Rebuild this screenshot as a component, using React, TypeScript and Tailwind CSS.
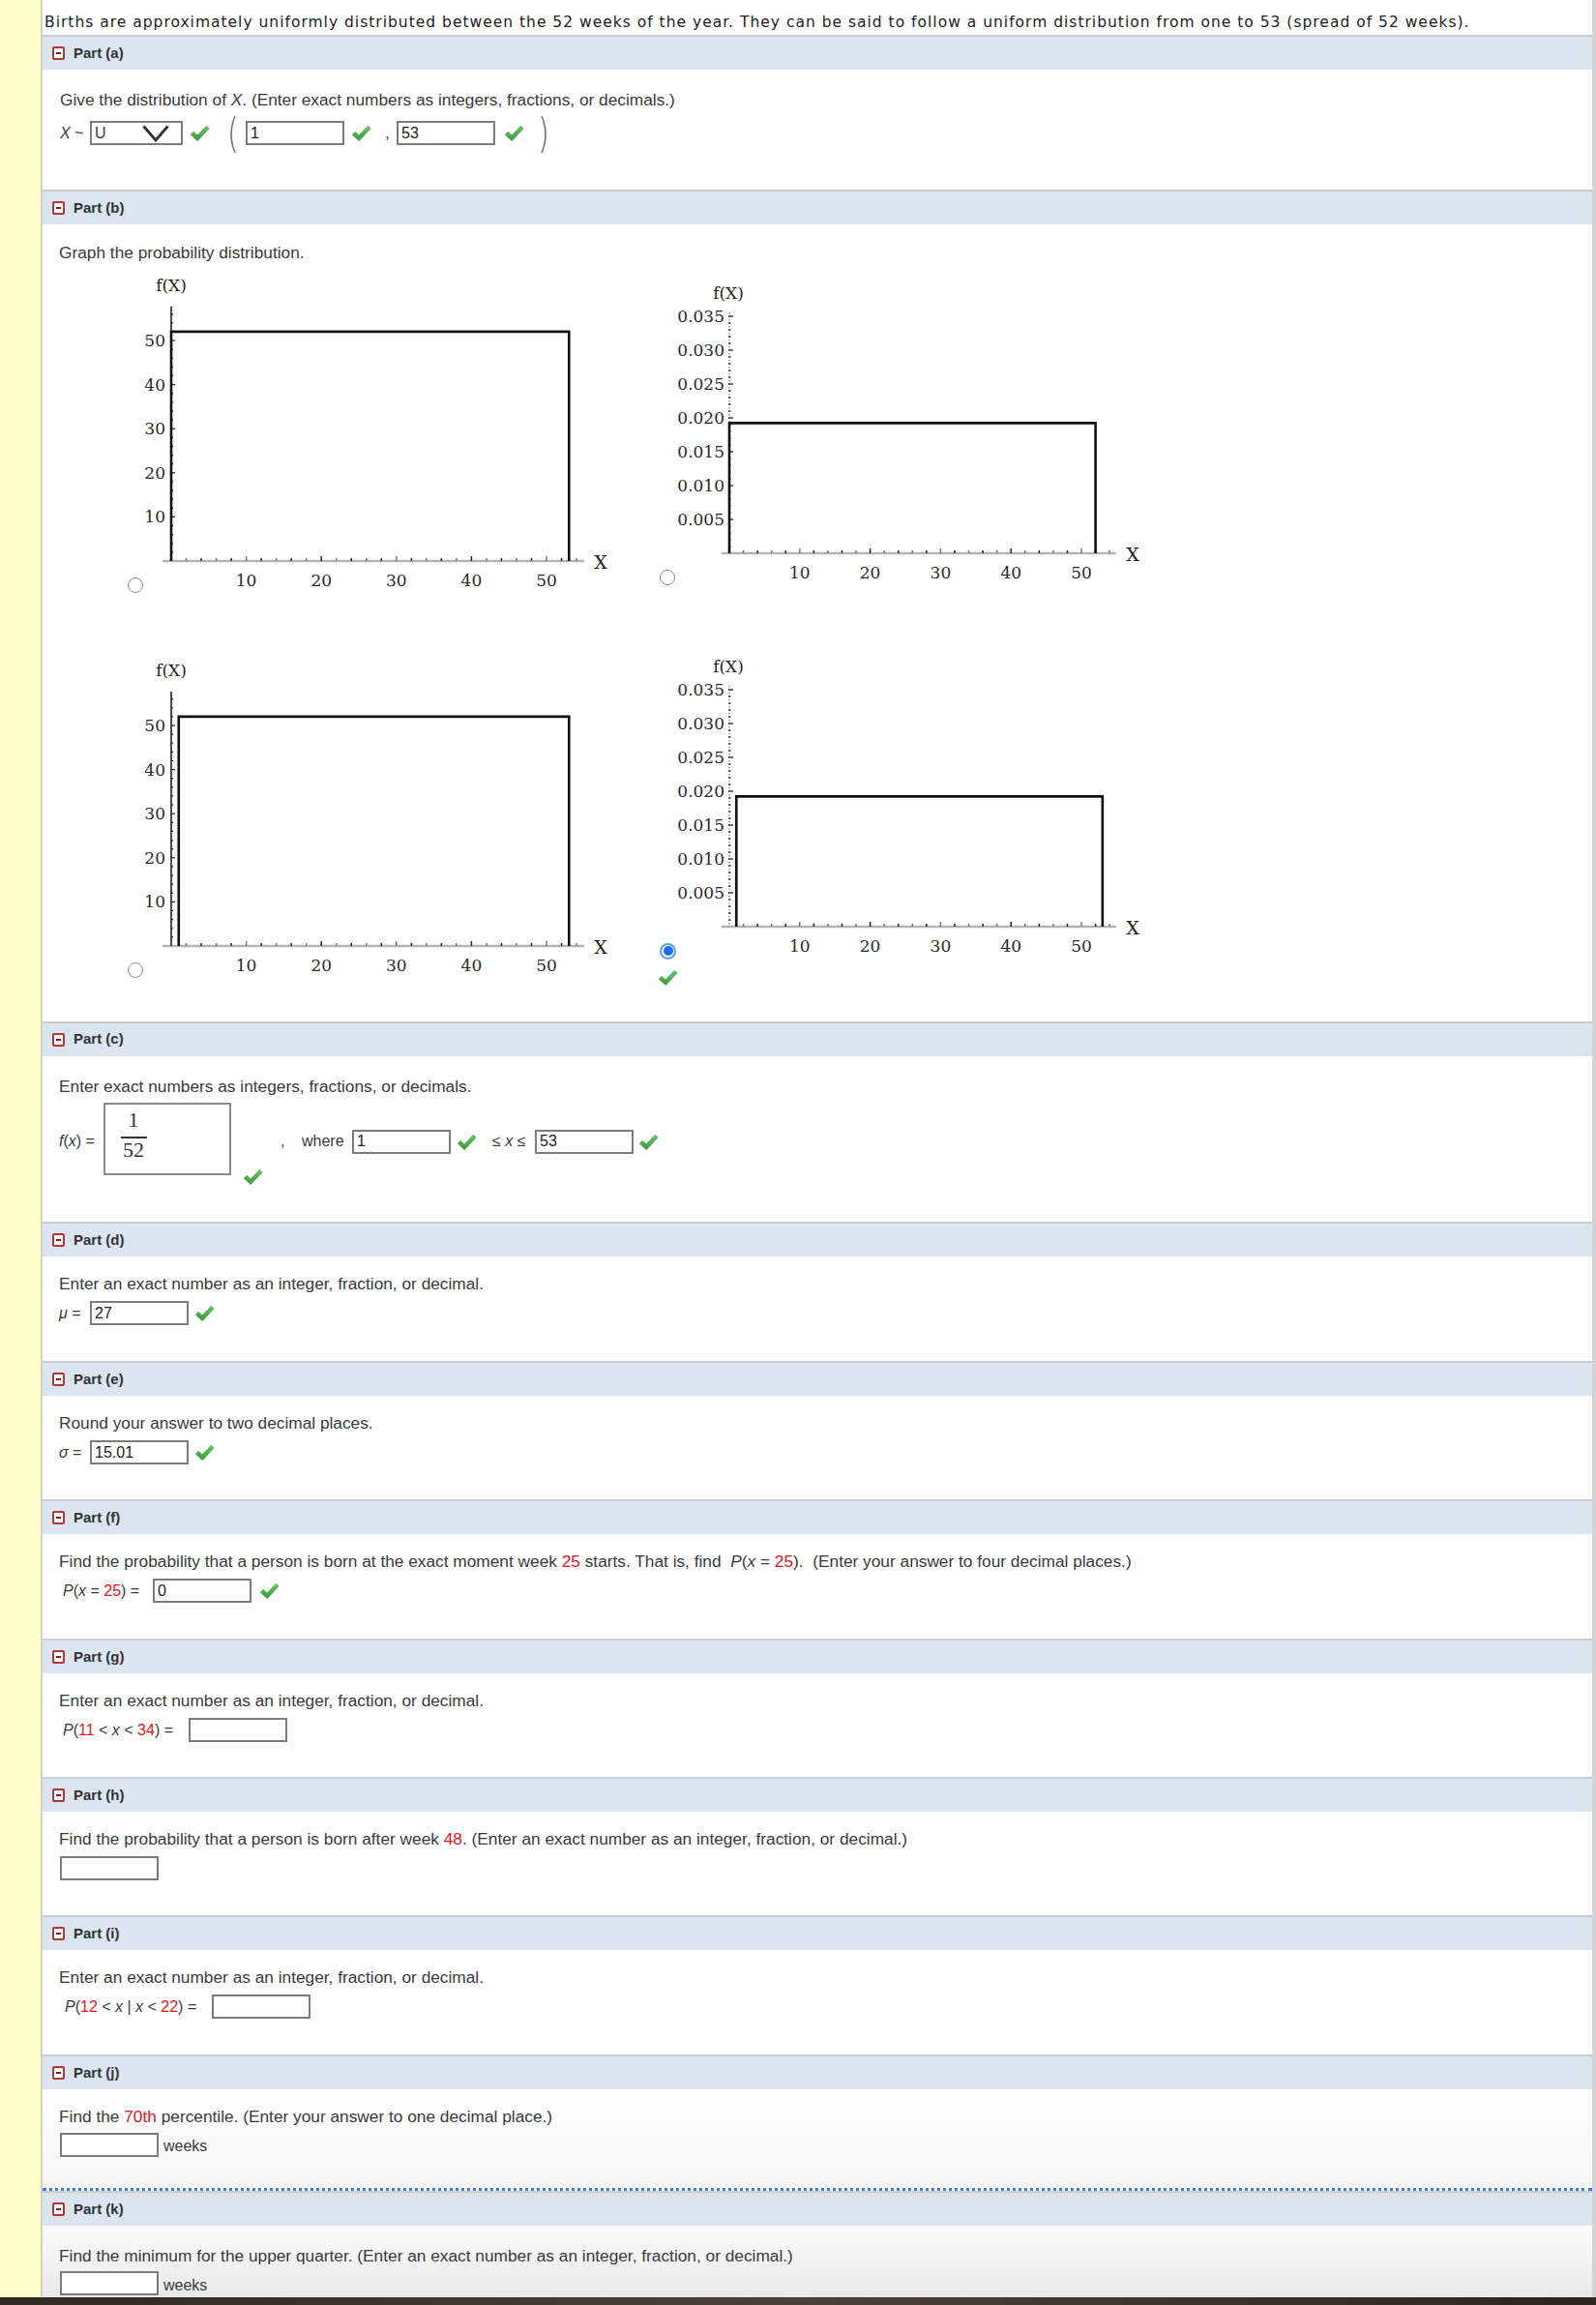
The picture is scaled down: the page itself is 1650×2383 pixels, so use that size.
import React from "react";

const SERIF = "DejaVu Serif, serif";

function Check({ className = "" }: { className?: string }) {
  return (
    <svg width="21" height="18" viewBox="0 0 21 18" className={"shrink-0 " + className}>
      <defs>
        <linearGradient id="cg" x1="0" y1="0" x2="0" y2="1">
          <stop offset="0" stopColor="#6cc46a" />
          <stop offset="1" stopColor="#3a9a3a" />
        </linearGradient>
      </defs>
      <path d="M0.8 10.2 L4.2 6.8 L8 10.4 L17.4 0.8 L20.6 4 L8.2 17 Z" fill="url(#cg)" />
    </svg>
  );
}

function Header({ label }: { label: string }) {
  return (
    <div className="h-[36px] bg-[#dae5ef] border-t-2 border-[#c9ced4] flex items-center pl-[10px]">
      <span className="w-[13px] h-[14px] border-2 border-[#b8352f] rounded-[2px] bg-white flex items-center justify-center">
        <span className="w-[5px] h-[2px] bg-[#8a1c1c]" />
      </span>
      <span className="ml-[9px] font-bold text-[15px] text-[#333] font-['Liberation_Sans',Arial,sans-serif]">{label}</span>
    </div>
  );
}

function Box({ value = "" }: { value?: string }) {
  return (
    <div className="w-[102px] h-[25px] shrink-0 border-2 border-[#7c7c7c] bg-white flex items-center pl-[3px] text-[16px] text-[#222] leading-none">
      {value}
    </div>
  );
}

function Red({ children }: { children: React.ReactNode }) {
  return <span className="text-[#e8141a]">{children}</span>;
}

function Radio({ selected = false }: { selected?: boolean }) {
  if (selected) {
    return (
      <div className="w-[17px] h-[17px] rounded-full border-2 border-[#5a9cf8] bg-white flex items-center justify-center shrink-0">
        <div className="w-[10px] h-[10px] rounded-full bg-[#1a6ff2]" />
      </div>
    );
  }
  return <div className="w-[16px] h-[16px] rounded-full border-[1.5px] border-[#8a8a8a] bg-white shrink-0" />;
}

function GraphInt({ x0 }: { x0: number }) {
  const ox = 27;
  const ay = 302;
  const xs = 7.76;
  const ys = 4.56;
  const X = (u: number) => ox + u * xs;
  const Y = (v: number) => ay - v * ys;
  const yt: number[] = [];
  for (let v = 2; v <= 56; v += 2) yt.push(v);
  const xt: number[] = [];
  for (let u = 2; u <= 54; u += 2) xt.push(u);
  return (
    <svg width="490" height="340" className="shrink-0">
      <text x={27} y={23} textAnchor="middle" fontFamily={SERIF} fontSize="17" fill="#222">
        f(X)
      </text>
      <line x1={18} y1={ay} x2={454} y2={ay} stroke="#b4b4b4" strokeWidth="2.5" />
      {xt.map((u) => (
        <line key={"x" + u} x1={X(u)} y1={ay} x2={X(u)} y2={u % 10 === 0 ? ay - 5 : ay - 3} stroke={u % 4 === 0 ? "#222" : "#777"} strokeWidth="1.5" />
      ))}
      <line x1={ox} y1={39} x2={ox} y2={ay} stroke="#222" strokeWidth="1.6" />
      {yt.map((v) => (
        <line key={"y" + v} x1={ox} y1={Y(v)} x2={v % 10 === 0 ? ox + 4 : ox + 2} y2={Y(v)} stroke="#222" strokeWidth="1.2" />
      ))}
      {[10, 20, 30, 40, 50].map((v) => (
        <text key={"yl" + v} x={21} y={Y(v) + 6} textAnchor="end" fontFamily={SERIF} fontSize="17" fill="#2a2a2a">
          {v}
        </text>
      ))}
      {[10, 20, 30, 40, 50].map((u) => (
        <text key={"xl" + u} x={X(u)} y={ay + 26} textAnchor="middle" fontFamily={SERIF} fontSize="17" fill="#2a2a2a">
          {u}
        </text>
      ))}
      <text x={471} y={ay + 8} textAnchor="middle" fontFamily={SERIF} fontSize="19" fill="#222">
        X
      </text>
      <polyline
        points={`${X(x0)},${ay} ${X(x0)},${Y(52)} ${X(53)},${Y(52)} ${X(53)},${ay}`}
        fill="none"
        stroke="#111"
        strokeWidth="2.6"
      />
    </svg>
  );
}

function GraphDec({ shift, x0, x1 }: { shift: number; x0: number; x1: number }) {
  const ox = 55;
  const ay = 294 - shift;
  const xs = 7.28;
  const X = (u: number) => ox + u * xs;
  const Y = (v: number) => ay - v * 7000;
  const yt: number[] = [];
  for (let k = 1; k <= 35; k++) yt.push(k);
  const xt: number[] = [];
  for (let u = 2; u <= 54; u += 2) xt.push(u);
  const labels = ["0.005", "0.010", "0.015", "0.020", "0.025", "0.030", "0.035"];
  return (
    <svg width="500" height="340" className="shrink-0">
      <text x={54} y={ay - 263} textAnchor="middle" fontFamily={SERIF} fontSize="17" fill="#222">
        f(X)
      </text>
      <line x1={47} y1={ay} x2={455} y2={ay} stroke="#b4b4b4" strokeWidth="2.5" />
      {xt.map((u) => (
        <line key={"x" + u} x1={X(u)} y1={ay} x2={X(u)} y2={u % 10 === 0 ? ay - 5 : ay - 3} stroke={u % 4 === 0 ? "#222" : "#777"} strokeWidth="1.5" />
      ))}
      <line x1={ox} y1={ay - 249} x2={ox} y2={ay} stroke="#9a9a9a" strokeWidth="1.5" strokeDasharray="1.5 2" />
      {yt.map((k) => (
        <line key={"y" + k} x1={ox - 1} y1={ay - k * 7} x2={k % 5 === 0 ? ox + 4 : ox + 1.5} y2={ay - k * 7} stroke="#222" strokeWidth="1.3" />
      ))}
      {labels.map((l, i) => (
        <text key={l} x={50} y={ay - (i + 1) * 35 + 6} textAnchor="end" fontFamily={SERIF} fontSize="17" fill="#2a2a2a">
          {l}
        </text>
      ))}
      {[10, 20, 30, 40, 50].map((u) => (
        <text key={"xl" + u} x={X(u)} y={ay + 26} textAnchor="middle" fontFamily={SERIF} fontSize="17" fill="#2a2a2a">
          {u}
        </text>
      ))}
      <text x={472} y={ay + 8} textAnchor="middle" fontFamily={SERIF} fontSize="19" fill="#222">
        X
      </text>
      <polyline
        points={`${X(x0)},${ay} ${X(x0)},${Y(1 / 52)} ${X(x1)},${Y(1 / 52)} ${X(x1)},${ay}`}
        fill="none"
        stroke="#111"
        strokeWidth="2.6"
      />
    </svg>
  );
}

function Prompt({ children }: { children: React.ReactNode }) {
  return <div className="h-[20px] leading-[20px] whitespace-nowrap">{children}</div>;
}

export default function App() {
  return (
    <div className="w-[1650px] h-[2383px] flex flex-col bg-white overflow-hidden font-['Liberation_Sans',Arial,sans-serif] text-[17.3px] text-[#3a3a3a]">
      <div className="flex h-[2375px] shrink-0">
        <div className="w-[42px] shrink-0 bg-[#ffffcc]" />
        <div className="flex-1 flex flex-col border-l-2 border-[#d2d2c8] border-r-[4px] border-r-[#d4d4d4] bg-white">
          {/* intro */}
          <div className="h-[36px] pt-[13px] pl-[2px]">
            <div className="leading-[20px] font-['DejaVu_Sans',sans-serif] text-[15.5px] tracking-[1px] text-[#222] whitespace-nowrap">
              Births are approximately uniformly distributed between the 52 weeks of the year. They can be said to follow a uniform distribution from one to 53 (spread of 52 weeks).
            </div>
          </div>

          {/* Part a */}
          <Header label="Part (a)" />
          <div className="h-[124px] pt-[21px] pl-[18px]">
            <Prompt>
              Give the distribution of <i>X</i>. (Enter exact numbers as integers, fractions, or decimals.)
            </Prompt>
            <div className="flex items-center h-[40px] mt-[5px]">
              <span className="w-[31px] shrink-0 whitespace-nowrap text-[16px]">
                <i>X</i> ~
              </span>
              <div className="w-[96px] h-[25px] shrink-0 border-2 border-[#7c7c7c] bg-white flex items-center justify-between pl-[3px] pr-[12px] leading-none text-[16px]">
                <span>U</span>
                <svg width="28" height="18" viewBox="0 0 28 18">
                  <polyline points="1.5,1.5 14,16 26.5,1.5" fill="none" stroke="#333" strokeWidth="2.8" />
                </svg>
              </div>
              <Check className="ml-[7px]" />
              <span className="ml-[18px] w-[19px] text-[30px] leading-none text-[#666] font-['DejaVu_Sans',sans-serif] font-extralight scale-y-[1.45] origin-center">(</span>
              <Box value="1" />
              <Check className="ml-[7px]" />
              <span className="ml-[14px] w-[12px]">,</span>
              <Box value="53" />
              <Check className="ml-[9px]" />
              <span className="ml-[14px] text-[30px] leading-none text-[#666] font-['DejaVu_Sans',sans-serif] font-extralight scale-y-[1.45] origin-center">)</span>
            </div>
          </div>

          {/* Part b */}
          <Header label="Part (b)" />
          <div className="h-[824px] pt-[19px] pl-[17px]">
            <Prompt>Graph the probability distribution.</Prompt>
            <div className="flex mt-[7px] ml-[71px] h-[340px]">
              <div className="flex items-start w-[550px] shrink-0">
                <div className="mt-[319px]">
                  <Radio />
                </div>
                <div className="ml-[2px]">
                  <GraphInt x0={0} />
                </div>
              </div>
              <div className="flex items-start">
                <div className="mt-[311px]">
                  <Radio />
                </div>
                <div className="ml-[1px]">
                  <GraphDec shift={0} x0={0} x1={52} />
                </div>
              </div>
            </div>
            <div className="flex mt-[58px] ml-[71px] h-[340px]">
              <div className="flex items-start w-[550px] shrink-0">
                <div className="mt-[319px]">
                  <Radio />
                </div>
                <div className="ml-[2px]">
                  <GraphInt x0={1} />
                </div>
              </div>
              <div className="flex items-start">
                <div className="mt-[299px] flex flex-col items-center w-[17px]">
                  <Radio selected />
                  <Check className="mt-[10px]" />
                </div>
                <div className="ml-[0px]">
                  <GraphDec shift={12} x0={1} x1={53} />
                </div>
              </div>
            </div>
          </div>

          {/* Part c */}
          <Header label="Part (c)" />
          <div className="h-[172px] pt-[21px] pl-[17px]">
            <Prompt>Enter exact numbers as integers, fractions, or decimals.</Prompt>
            <div className="flex items-start mt-[7px] text-[16px]">
              <span className="w-[46px] shrink-0 mt-[30px] leading-[20px] whitespace-nowrap">
                <i>f</i>(<i>x</i>) =
              </span>
              <div className="w-[132px] h-[75px] shrink-0 border-2 border-[#8a8a8a] bg-white pl-[15px] pt-[5px]">
                <div className="w-[28px] flex flex-col items-center font-['Liberation_Serif',serif] text-[22px] text-[#333]">
                  <span className="leading-[22px]">1</span>
                  <span className="w-[27px] h-[2px] bg-[#333] mt-[6px]" />
                  <span className="leading-[22px] mt-[1px]">52</span>
                </div>
              </div>
              <Check className="ml-[12px] mt-[68px]" />
              <span className="ml-[18px] w-[22px] mt-[30px] leading-[20px]">,</span>
              <span className="w-[52px] mt-[30px] leading-[20px]">where</span>
              <div className="mt-[28px]">
                <Box value="1" />
              </div>
              <Check className="ml-[6px] mt-[32px]" />
              <span className="ml-[16px] w-[44px] mt-[30px] leading-[20px] whitespace-nowrap">
                ≤ <i>x</i> ≤
              </span>
              <div className="mt-[28px]">
                <Box value="53" />
              </div>
              <Check className="ml-[5px] mt-[32px]" />
            </div>
          </div>

          {/* Part d */}
          <Header label="Part (d)" />
          <div className="h-[108px] pt-[18px] pl-[17px]">
            <Prompt>Enter an exact number as an integer, fraction, or decimal.</Prompt>
            <div className="flex items-center mt-[8px]">
              <span className="w-[32px] shrink-0 whitespace-nowrap text-[16px]">
                <i>μ</i> =
              </span>
              <Box value="27" />
              <Check className="ml-[6px]" />
            </div>
          </div>

          {/* Part e */}
          <Header label="Part (e)" />
          <div className="h-[107px] pt-[18px] pl-[17px]">
            <Prompt>Round your answer to two decimal places.</Prompt>
            <div className="flex items-center mt-[8px]">
              <span className="w-[32px] shrink-0 whitespace-nowrap text-[16px]">
                <i>σ</i> =
              </span>
              <Box value="15.01" />
              <Check className="ml-[6px]" />
            </div>
          </div>

          {/* Part f */}
          <Header label="Part (f)" />
          <div className="h-[108px] pt-[18px] pl-[17px]">
            <Prompt>
              Find the probability that a person is born at the exact moment week <Red>25</Red> starts. That is, find&nbsp; <i>P</i>(<i>x</i> = <Red>25</Red>).&nbsp; (Enter your answer to four decimal places.)
            </Prompt>
            <div className="flex items-center mt-[8px]">
              <span className="ml-[4px] w-[93px] shrink-0 whitespace-nowrap text-[16px]">
                <i>P</i>(<i>x</i> = <Red>25</Red>) =
              </span>
              <Box value="0" />
              <Check className="ml-[8px]" />
            </div>
          </div>

          {/* Part g */}
          <Header label="Part (g)" />
          <div className="h-[107px] pt-[18px] pl-[17px]">
            <Prompt>Enter an exact number as an integer, fraction, or decimal.</Prompt>
            <div className="flex items-center mt-[8px]">
              <span className="ml-[4px] w-[130px] shrink-0 whitespace-nowrap text-[16px]">
                <i>P</i>(<Red>11</Red> &lt; <i>x</i> &lt; <Red>34</Red>) =
              </span>
              <Box />
            </div>
          </div>

          {/* Part h */}
          <Header label="Part (h)" />
          <div className="h-[107px] pt-[18px] pl-[17px]">
            <Prompt>
              Find the probability that a person is born after week <Red>48</Red>. (Enter an exact number as an integer, fraction, or decimal.)
            </Prompt>
            <div className="flex items-center mt-[8px] ml-[1px]">
              <Box />
            </div>
          </div>

          {/* Part i */}
          <Header label="Part (i)" />
          <div className="h-[108px] pt-[18px] pl-[17px]">
            <Prompt>Enter an exact number as an integer, fraction, or decimal.</Prompt>
            <div className="flex items-center mt-[8px]">
              <span className="ml-[6px] w-[152px] shrink-0 whitespace-nowrap text-[16px]">
                <i>P</i>(<Red>12</Red> &lt; <i>x</i> | <i>x</i> &lt; <Red>22</Red>) =
              </span>
              <Box />
            </div>
          </div>

          {/* Part j */}
          <Header label="Part (j)" />
          <div className="h-[105px] pt-[18px] pl-[17px] bg-gradient-to-b from-white to-[#f6f6f6] border-b-[3px] border-dotted border-[#3d7fd6]">
            <Prompt>
              Find the <Red>70th</Red> percentile. (Enter your answer to one decimal place.)
            </Prompt>
            <div className="flex items-center mt-[5px] ml-[1px]">
              <div className="h-[28px] flex items-center">
                <Box />
              </div>
              <span className="ml-[5px] mt-[4px] text-[16px]">weeks</span>
            </div>
          </div>

          {/* Part k */}
          <Header label="Part (k)" />
          <div className="flex-1 pt-[21px] pl-[17px] bg-gradient-to-b from-[#fbfbfb] to-[#e9e9e9]">
            <Prompt>Find the minimum for the upper quarter. (Enter an exact number as an integer, fraction, or decimal.)</Prompt>
            <div className="flex items-center mt-[5px] ml-[1px]">
              <Box />
              <span className="ml-[5px] mt-[4px] text-[16px]">weeks</span>
            </div>
          </div>
        </div>
      </div>
      <div className="h-[8px] shrink-0 bg-gradient-to-r from-[#2d2a22] via-[#4a4236] to-[#2a2620]" />
    </div>
  );
}
